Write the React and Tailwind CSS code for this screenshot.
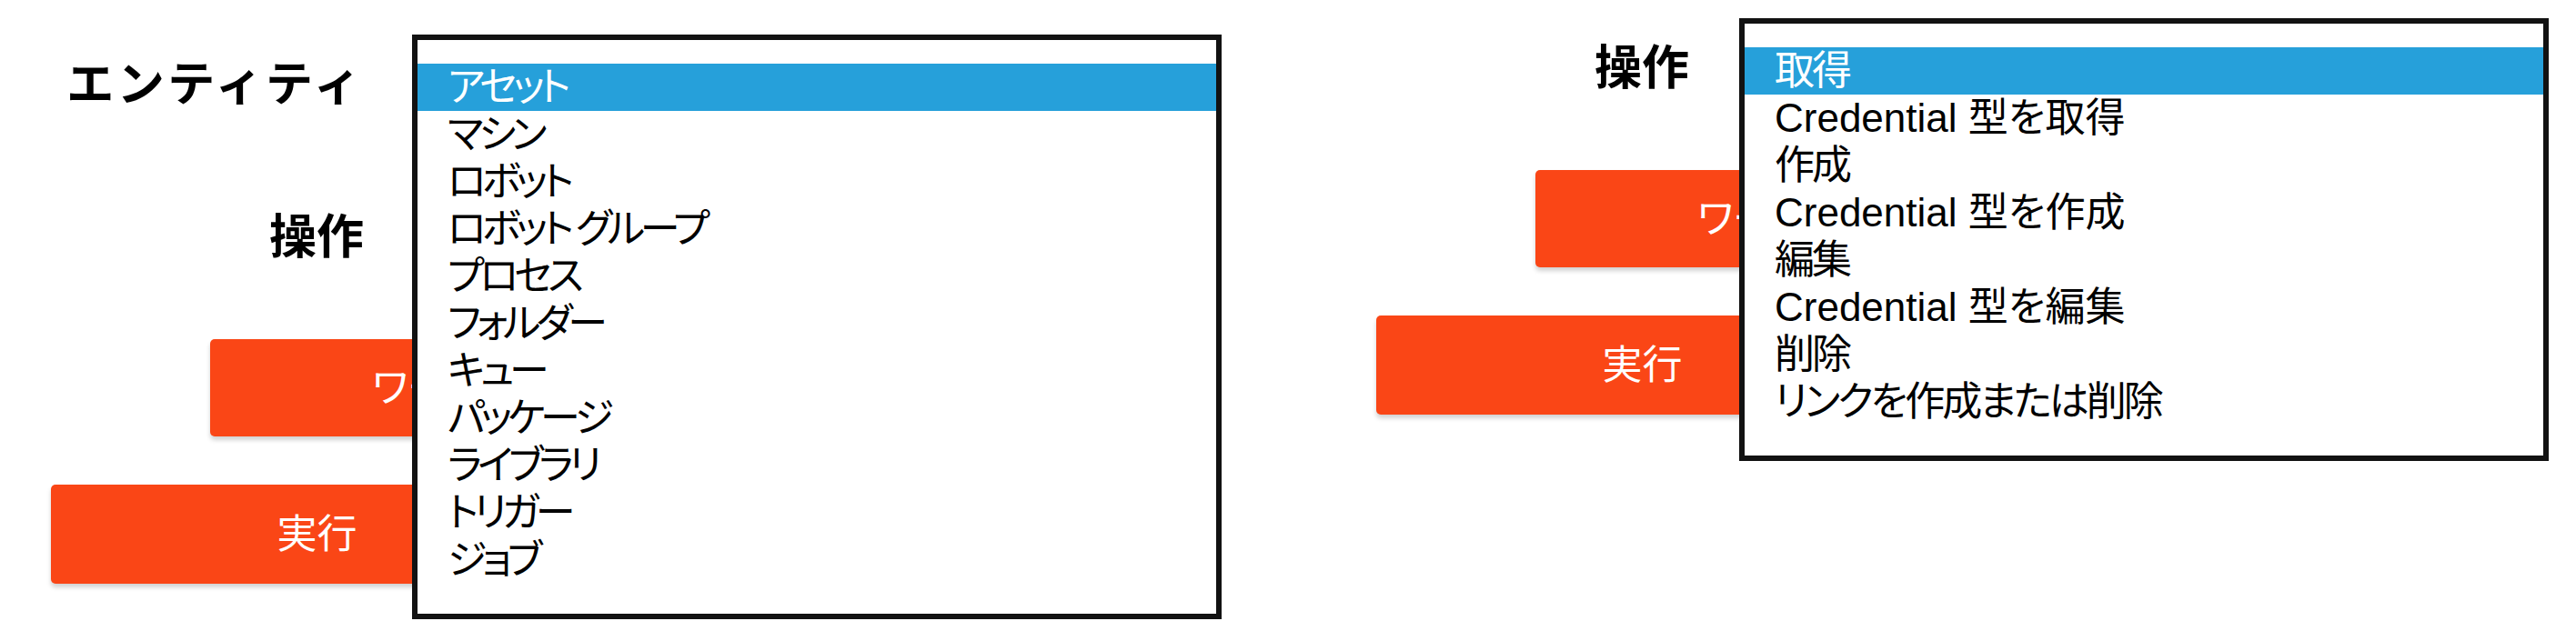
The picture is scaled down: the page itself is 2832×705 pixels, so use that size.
const entities = ['アセット', 'マシン', 'ロボット', 'ロボット グループ', 'プロセス', 'フォルダー', 'キュー', 'パッケージ', 'ライブラリ', 'トリガー', 'ジョブ']

const operations = [
  '取得',
  'Credential 型を取得',
  '作成',
  'Credential 型を作成',
  '編集',
  'Credential 型を編集',
  '削除',
  'リンクを作成または削除',
]

// kana in the reference font run narrower than Noto, so tighten rows with no latin text
function OptionList({ items, tight, className }) {
  return (
    <div className={`absolute z-10 w-[890px] border-[6px] border-[#121212] bg-white pt-[26px] pb-[33px] ${className}`}>
      {items.map((item, i) => (
        <div
          key={item}
          className={`h-[52px] pl-[33px] text-[44px] leading-[52px] whitespace-pre [font-feature-settings:'palt'] ${
            /[A-Za-z]/.test(item) ? '' : tight
          } ${i === 0 ? 'bg-[#26a0da] text-white' : 'text-black'}`}
        >
          {item}
        </div>
      ))}
    </div>
  )
}

function Form({ withEntity }) {
  return (
    <div className={withEntity ? 'pt-[62px]' : 'pt-[44px]'}>
      {withEntity && (
        <div className="mb-[106px] w-[400px] text-right text-[52px] font-bold leading-[62px] tracking-[3.5px] text-black">エンティティ</div>
      )}
      <div className="w-[400px] text-right text-[52px] font-bold leading-[62px] text-black">操作</div>
      <button className="mt-[81px] ml-[231px] flex h-[107px] w-[730px] items-center justify-center rounded-[5px] bg-[#fa4616] text-[44px] text-white shadow-[0_4px_5px_rgba(0,0,0,0.18)] [font-feature-settings:'palt']">
        ワークフローを作成
      </button>
      <button className="mt-[53px] ml-[56px] flex h-[109px] w-[585px] items-center justify-center rounded-[5px] bg-[#fa4616] text-[44px] text-white shadow-[0_4px_5px_rgba(0,0,0,0.18)]">
        実行
      </button>
    </div>
  )
}

export default function App() {
  return (
    <div className="flex h-[705px] w-[2832px] overflow-hidden bg-white font-['Liberation_Sans','Noto_Sans_CJK_JP',sans-serif]">
      <div className="relative h-full w-[1457px] shrink-0">
        <Form withEntity />
        <OptionList items={entities} tight="tracking-[-5px]" className="left-[453px] top-[38px]" />
      </div>
      <div className="relative h-full flex-1 overflow-hidden">
        <Form />
        <OptionList items={operations} tight="tracking-[-3px]" className="left-[455px] top-[20px]" />
      </div>
    </div>
  )
}
